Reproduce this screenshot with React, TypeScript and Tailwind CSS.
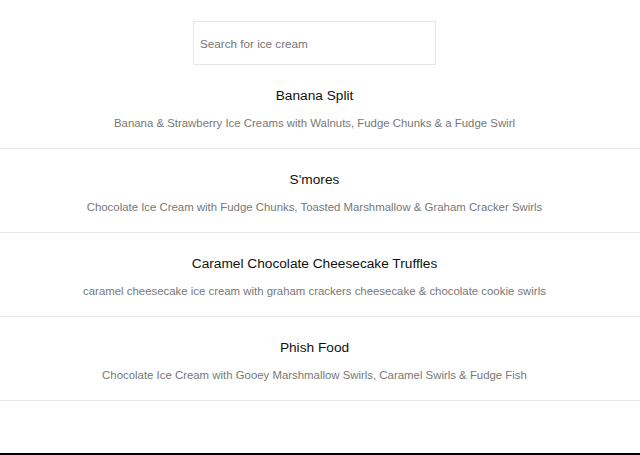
const flavours = [
  {
    name: 'Banana Split',
    description: 'Banana & Strawberry Ice Creams with Walnuts, Fudge Chunks & a Fudge Swirl',
  },
  {
    name: "S'mores",
    description: 'Chocolate Ice Cream with Fudge Chunks, Toasted Marshmallow & Graham Cracker Swirls',
  },
  {
    name: 'Caramel Chocolate Cheesecake Truffles',
    description: 'caramel cheesecake ice cream with graham crackers cheesecake & chocolate cookie swirls',
  },
  {
    name: 'Phish Food',
    description: 'Chocolate Ice Cream with Gooey Marshmallow Swirls, Caramel Swirls & Fudge Fish',
  },
];

export default function App() {
  return (
    <div
      className="flex h-[455px] flex-col overflow-hidden border-b-2 border-black bg-white"
      style={{ fontFamily: '"Liberation Sans", Arial, sans-serif' }}
    >
      <div className="flex justify-center pr-[11px] pt-[21px]">
        <input
          type="text"
          placeholder="Search for ice cream"
          className="h-[44px] w-[243px] border border-[#e6e6e6] px-[6px] text-[11.7px] text-[#333] outline-none placeholder:text-[#757575]"
        />
      </div>
      <ul>
        {flavours.map((f) => (
          <li key={f.name} className="h-[84px] border-b border-[#e8e8e8] pr-[11px] pt-[21px] text-center">
            <h2 className="text-[13.7px] leading-[20px] text-[#111]">{f.name}</h2>
            <p className="mt-[9px] text-[11.4px] leading-[16px] text-[#777]">{f.description}</p>
          </li>
        ))}
      </ul>
    </div>
  );
}
